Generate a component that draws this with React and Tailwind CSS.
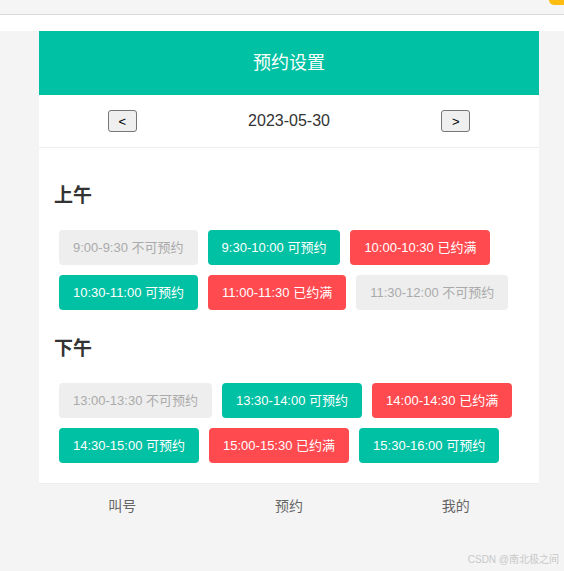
const slotsAm = [
  { time: "9:00-9:30", status: "off" },
  { time: "9:30-10:00", status: "open" },
  { time: "10:00-10:30", status: "full" },
  { time: "10:30-11:00", status: "open" },
  { time: "11:00-11:30", status: "full" },
  { time: "11:30-12:00", status: "off" },
];

const slotsPm = [
  { time: "13:00-13:30", status: "off" },
  { time: "13:30-14:00", status: "open" },
  { time: "14:00-14:30", status: "full" },
  { time: "14:30-15:00", status: "open" },
  { time: "15:00-15:30", status: "full" },
  { time: "15:30-16:00", status: "open" },
];

const statusLabel = {
  off: "不可预约",
  open: "可预约",
  full: "已约满",
};

const statusClass = {
  off: "bg-[#eeeeee] text-[#aaaaaa]",
  open: "bg-[#00c1a3] text-white",
  full: "bg-[#ff4a4f] text-white",
};

function Slot({ slot }) {
  return (
    <div
      className={`h-[35px] px-[14px] rounded-[4px] text-[13px] leading-[35px] whitespace-nowrap ${statusClass[slot.status]}`}
    >
      {slot.time} {statusLabel[slot.status]}
    </div>
  );
}

function Section({ title, slots, first }) {
  return (
    <div className={first ? "" : "mt-[28px]"}>
      <h3 className="h-[22px] leading-[22px] text-[19px] font-bold text-[#333]">
        {title}
      </h3>

      <div className="mt-[23px] px-[5px] flex flex-wrap gap-[10px]">
        {slots.map((slot) => (
          <Slot key={slot.time} slot={slot} />
        ))}
      </div>
    </div>
  );
}

export default function App() {
  return (
    <div className="relative min-h-screen bg-[#f4f4f4] font-['Liberation_Sans','Noto_Sans_CJK_SC',sans-serif]">

      {/* BROWSER STRIP */}
      <div className="h-[15px] bg-[#f5f5f5] border-b border-[#d9d9d9]" />
      <div className="h-[16px] bg-white" />
      <div className="absolute top-0 right-0 w-[15px] h-[5px] rounded-bl-[5px] bg-[#fdbd10]" />

      <div className="ml-[39px] w-[500px]">

        {/* HEADER */}
        <div className="h-[64px] bg-[#00c1a3] flex items-center justify-center text-white text-[18px]">
          预约设置
        </div>

        <div className="bg-white border-b border-[#eeeeee]">

          {/* DATE */}
          <div className="h-[53px] flex items-center border-b border-[#eeeeee]">
            <div className="flex-1 flex justify-center">
              <button className="w-[29px] h-[22px] border border-[#767676] rounded-[3px] bg-[#efefef] text-[13px] text-black leading-none">
                &lt;
              </button>
            </div>
            <div className="flex-1 text-center text-[16px] text-[#333]">
              2023-05-30
            </div>
            <div className="flex-1 flex justify-center">
              <button className="w-[29px] h-[22px] border border-[#767676] rounded-[3px] bg-[#efefef] text-[13px] text-black leading-none">
                &gt;
              </button>
            </div>
          </div>

          {/* SLOTS */}
          <div className="pt-[37px] px-[15px] pb-[20px]">
            <Section title="上午" slots={slotsAm} first />
            <Section title="下午" slots={slotsPm} />
          </div>
        </div>

        {/* TABS */}
        <div className="h-[44px] flex items-center text-[14px] text-[#666]">
          <div className="flex-1 text-center">叫号</div>
          <div className="flex-1 text-center">预约</div>
          <div className="flex-1 text-center">我的</div>
        </div>
      </div>

      <div className="absolute right-[5px] bottom-[4px] text-[10px] text-[#c8c8c8]">
        CSDN @南北极之间
      </div>
    </div>
  );
}
